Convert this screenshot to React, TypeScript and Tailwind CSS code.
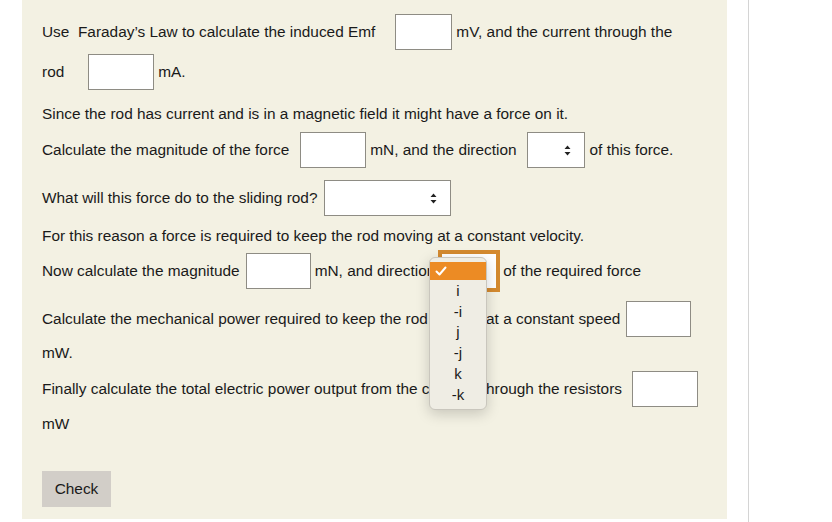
import React from "react";

function Box({ w = 65, className = "" }: { w?: number; className?: string }) {
  return <span className={`block shrink-0 h-[36px] bg-white border border-[#8e8c84] ${className}`} style={{ width: w }} />;
}

function Sel({ w, className = "" }: { w: number; className?: string }) {
  return (
    <span className={`flex shrink-0 h-[36px] items-center justify-end pr-[13px] bg-white border border-[#8e8c84] ${className}`} style={{ width: w }}>
      <svg width="7" height="11" viewBox="0 0 7 11">
        <path d="M3.5 0.5L6.5 4H0.5Z M3.5 10.5L6.5 7H0.5Z" fill="#222" />
      </svg>
    </span>
  );
}

export default function App() {
  return (
    <div className="relative w-[832px] h-[522px] bg-white text-[15.4px] text-[#1a1a1a] font-['Liberation_Sans',Arial,sans-serif] overflow-hidden">
      <div className="absolute left-[748px] top-0 h-[522px] w-px bg-[#d4d4d4]" />
      <div className="ml-[22px] w-[705px] h-[519px] bg-[#f3f1e3] pl-[20px] pt-[14px] flex flex-col whitespace-nowrap">
        <div className="flex items-center h-[36px]">
          <span>Use&nbsp; Faraday’s Law to calculate the induced Emf</span>
          <Box w={57} className="ml-[20px]" />
          <span className="ml-[4px]">mV, and the current through the</span>
        </div>
        <div className="flex items-center h-[36px] mt-[4px]">
          <span>rod</span>
          <Box w={66} className="ml-[24px]" />
          <span className="ml-[4px]">mA.</span>
        </div>
        <div className="flex items-center h-[20px] mt-[14px]">Since the rod has current and is in a magnetic field it might have a force on it.</div>
        <div className="flex items-center h-[36px] mt-[8px]">
          <span>Calculate the magnitude of the force</span>
          <Box w={66} className="ml-[11px]" />
          <span className="ml-[4px]">mN, and the direction</span>
          <Sel w={58} className="ml-[10px]" />
          <span className="ml-[5px]">of this force.</span>
        </div>
        <div className="flex items-center h-[36px] mt-[12px]">
          <span>What will this force do to the sliding rod?</span>
          <Sel w={127} className="ml-[7px]" />
        </div>
        <div className="flex items-center h-[20px] mt-[10px]">For this reason a force is required to keep the rod moving at a constant velocity.</div>
        <div className="relative flex items-center h-[36px] mt-[7px]">
          <span>Now calculate the magnitude</span>
          <Box w={65} className="ml-[6px]" />
          <span className="ml-[4px]">mN, and direction</span>
          <span className="ml-[3px] shrink-0 block h-[42px] w-[62px] border-[4px] border-[#d48a30] bg-white" />
          <span className="ml-[3px]">of the required force</span>
          <div className="absolute left-[387px] top-[4px] w-[58px] h-[153px] rounded-[6px] bg-[#efede4] border border-[#c9c6bd] shadow-[0_4px_14px_rgba(0,0,0,0.18)] pt-[4px] z-10">
            <div className="h-[18px] bg-[#ec8b24] flex items-center pl-[5px]">
              <svg width="12" height="10" viewBox="0 0 12 10">
                <path d="M1.5 5.5L4.5 8.5L10.5 1.5" fill="none" stroke="#fff" strokeWidth="2" strokeLinecap="round" strokeLinejoin="round" />
              </svg>
            </div>
            {["i", "-i", "j", "-j", "k", "-k"].map((t) => (
              <div key={t} className="h-[20.8px] flex items-center justify-center text-[15px] leading-none">{t}</div>
            ))}
          </div>
        </div>
        <div className="flex items-center h-[36px] mt-[12px]">
          <span>Calculate the mechanical power required to keep the rod moving at a constant speed</span>
          <Box w={65} className="ml-[6px]" />
        </div>
        <div className="flex items-center h-[20px] mt-[6px]">mW.</div>
        <div className="flex items-center h-[36px] mt-[8px]">
          <span>Finally calculate the total electric power output from the currents through the resistors</span>
          <Box w={66} className="ml-[10px]" />
        </div>
        <div className="flex items-center h-[20px] mt-[7px]">mW</div>
        <div className="mt-[37px]">
          <button className="h-[36px] w-[69px] bg-[#d2cec8] text-[15.4px]">Check</button>
        </div>
      </div>
    </div>
  );
}
